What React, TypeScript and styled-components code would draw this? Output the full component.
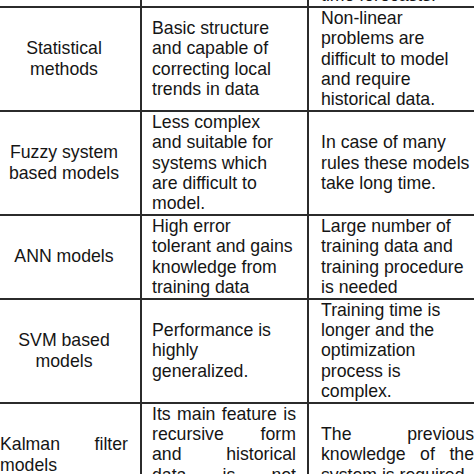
import React from 'react';
import styled, { createGlobalStyle } from 'styled-components';

type Align = 'left' | 'center';

interface CellData {
  lines: string[];
  align?: Align;
  spread?: boolean;
}

const rows: CellData[][] = [
  [
    { lines: [] },
    { lines: [] },
    { lines: ['Suitable for short', 'time forecasts.'] },
  ],
  [
    { lines: ['Statistical', 'methods'], align: 'center' },
    { lines: ['Basic structure', 'and capable of', 'correcting local', 'trends in data'] },
    { lines: ['Non-linear', 'problems are', 'difficult to model', 'and require', 'historical data.'] },
  ],
  [
    { lines: ['Fuzzy system', 'based models'], align: 'center' },
    { lines: ['Less complex', 'and suitable for', 'systems which', 'are difficult to', 'model.'] },
    { lines: ['In case of many', 'rules these models', 'take long time.'] },
  ],
  [
    { lines: ['ANN models'], align: 'center' },
    { lines: ['High error', 'tolerant and gains', 'knowledge from', 'training data'] },
    { lines: ['Large number of', 'training data and', 'training procedure', 'is needed'] },
  ],
  [
    { lines: ['SVM based', 'models'], align: 'center' },
    { lines: ['Performance is', 'highly', 'generalized.'] },
    { lines: ['Training time is', 'longer and the', 'optimization', 'process is', 'complex.'] },
  ],
  [
    { lines: ['Kalman filter', 'models'], spread: true },
    { lines: ['Its main feature is', 'recursive form', 'and historical', 'data is not', 'required.'], spread: true },
    { lines: ['The previous', 'knowledge of the', 'system is required.'], spread: true },
  ],
];

export default function App() {
  return (
    <>
      <GlobalStyle />
      <Table>
        {rows.map((row, r) =>
          row.map((cell, c) => (
            <Cell key={`${r}-${c}`} $col={c} $align={cell.align || 'left'}>
              {cell.lines.map((line, i) => (
                <Line key={i} $spread={!!cell.spread && i < cell.lines.length - 1}>
                  {line}
                </Line>
              ))}
            </Cell>
          ))
        )}
      </Table>
    </>
  );
}

const GlobalStyle = createGlobalStyle`
  html, body {
    margin: 0;
    padding: 0;
    background: #ffffff;
    overflow: hidden;
  }
`;

const Table = styled.div`
  display: grid;
  grid-template-columns: 152px 165px 177px;
  gap: 2px;
  padding: 2px;
  width: max-content;
  margin: -37px 0 0 -14px;
  background: #2b2b2b;
  font-family: "Liberation Sans", Arial, sans-serif;
  font-size: 17.7px;
  line-height: 20.4px;
  color: #151515;
`;

const Cell = styled.div<{ $col: number; $align: Align }>`
  display: flex;
  flex-direction: column;
  justify-content: center;
  background: #ffffff;
  text-align: ${({ $align }) => $align};
  padding: ${({ $col }) => ($col === 1 ? '0 11px 0 10px' : '0 12px')};
`;

const Line = styled.span<{ $spread: boolean }>`
  display: block;
  white-space: nowrap;
  text-align-last: ${({ $spread }) => ($spread ? 'justify' : 'auto')};
`;
